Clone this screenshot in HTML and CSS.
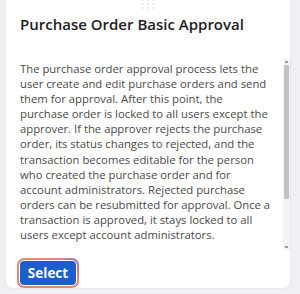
FILE: index.html
```html
<!DOCTYPE html>
<html>
<head>
<meta charset="utf-8">
<link rel="stylesheet" href="styles.css">
</head>
<body>
<div class="card">
  <div class="handle"><span></span><span></span><span></span><span></span><span></span><span></span></div>
  <h2 class="title">Purchase Order Basic Approval</h2>
  <div class="scroll">
    <p class="desc">The purchase order approval process lets the<br>user create and edit purchase orders and send<br>them for approval. After this point, the<br>purchase order is locked to all users except the<br>approver. If the approver rejects the purchase<br>order, its status changes to rejected, and the<br>transaction becomes editable for the person<br>who created the purchase order and for<br>account administrators. Rejected purchase<br>orders can be resubmitted for approval. Once a<br>transaction is approved, it stays locked to all<br>users except account administrators.</p>
    <div class="bar">
      <div class="arrow up"></div>
      <div class="track"><div class="thumb"></div></div>
      <div class="arrow down"></div>
    </div>
  </div>
  <div class="actions">
    <div class="ring"><button class="btn">Select</button></div>
  </div>
</div>
</body>
</html>
```
FILE: styles.css
```css
html, body { margin: 0; padding: 0; }
body {
  width: 300px;
  height: 294px;
  background: #eef0f3;
  font-family: "Open Sans", "Liberation Sans", sans-serif;
  overflow: hidden;
}
.card {
  margin-left: 6px;
  width: 284px;
  height: 288px;
  background: #fff;
  border-radius: 0 0 6px 6px;
  box-shadow: 0 0 0 1px #e6e8eb;
  display: flex;
  flex-direction: column;
  box-sizing: border-box;
}
.handle {
  display: grid;
  grid-template-columns: repeat(3, 2px);
  gap: 2px 3px;
  justify-content: center;
  padding-top: 3px;
  height: 6px;
}
.handle span { width: 2px; height: 2px; background: #e2e4e7; border-radius: 1px; }
.title {
  margin: 5px 0 0 14px;
  font-size: 15px;
  font-weight: 600;
  color: #1e1e1e;
  line-height: 20px;
}
.scroll {
  margin-top: 24px;
  display: flex;
  height: 193px;
}
.desc {
  margin: 3px 0 0 14px;
  width: 258px;
  white-space: nowrap;
  font-size: 11.3px;
  line-height: 15.1px;
  color: #4a4a4a;
}
.bar {
  margin-left: auto;
  width: 7px;
  display: flex;
  flex-direction: column;
  background: #f4f4f4;
}
.arrow { height: 7px; display: flex; justify-content: center; align-items: center; }
.arrow::before { content: ""; width: 3px; height: 2px; background: #9a9a9a; }
.track { flex: 1; }
.thumb { margin: 0 1px; height: 134px; background: #c2c2c2; }
.actions { padding: 8px 0 0 11px; }
.ring {
  display: inline-block;
  padding: 2px;
  border-radius: 7px;
  background: linear-gradient(225deg, #9a6ad8 0%, #e98a70 25%, #e8836a 100%);
}
.btn {
  display: block;
  border: 1px solid #fff;
  background: #1b5fcc;
  color: #fff;
  font-family: "Open Sans", "Liberation Sans", sans-serif;
  font-weight: 700;
  font-size: 13.5px;
  width: 58px;
  height: 26px;
  border-radius: 5px;
  padding: 0;
}
```
